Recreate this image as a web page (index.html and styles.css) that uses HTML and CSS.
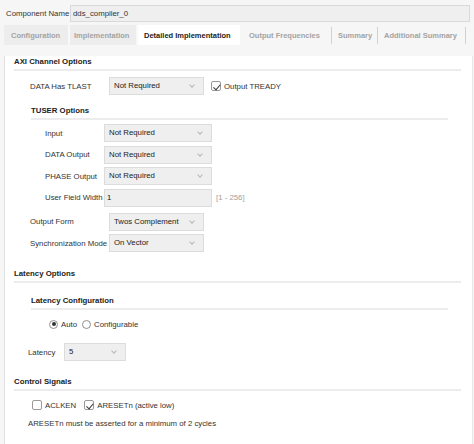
FILE: index.html
```html
<!DOCTYPE html>
<html>
<head>
<meta charset="utf-8">
<link rel="stylesheet" href="styles.css">
</head>
<body>
<div class="top">
  <span class="top-label">Component Name</span>
  <div class="name-input">dds_compiler_0</div>
</div>
<div class="tabs">
  <div class="tab t1">Configuration</div>
  <div class="tab t2">Implementation</div>
  <div class="tab active">Detailed Implementation</div>
  <div class="tab sep">Output Frequencies</div>
  <div class="tab sep">Summary</div>
  <div class="tab sep">Additional Summary</div>
</div>
<div class="panel">
  <div class="hdr h-axi">AXI Channel Options</div>
  <div class="row r-tlast">
    <span class="lbl w78">DATA Has TLAST</span>
    <div class="sel w95">Not Required<span class="chev"></span></div>
    <span class="chk on"></span><span class="ctext">Output TREADY</span>
  </div>
  <div class="hdr sub h-tuser">TUSER Options</div>
  <div class="tuser">
    <div class="row"><span class="lbl w60">Input</span><div class="sel w108">Not Required<span class="chev"></span></div></div>
    <div class="row"><span class="lbl w60">DATA Output</span><div class="sel w108">Not Required<span class="chev"></span></div></div>
    <div class="row"><span class="lbl w60">PHASE Output</span><div class="sel w108">Not Required<span class="chev"></span></div></div>
    <div class="row"><span class="lbl w60">User Field Width</span><div class="inp w108">1</div><span class="range">[1 - 256]</span></div>
  </div>
  <div class="plain">
    <div class="row"><span class="lbl w78">Output Form</span><div class="sel w95">Twos Complement<span class="chev"></span></div></div>
    <div class="row"><span class="lbl w78">Synchronization Mode</span><div class="sel w95">On Vector<span class="chev"></span></div></div>
  </div>
  <div class="hdr h-lat">Latency Options</div>
  <div class="hdr sub h-latcfg">Latency Configuration</div>
  <div class="radios">
    <span class="radio on"></span><span class="rtext">Auto</span>
    <span class="radio"></span><span class="rtext">Configurable</span>
  </div>
  <div class="row r-lat"><span class="lbl w30">Latency</span><div class="sel w62">5<span class="chev"></span></div></div>
  <div class="hdr h-ctrl">Control Signals</div>
  <div class="checks">
    <span class="chk"></span><span class="ctext">ACLKEN</span>
    <span class="chk on"></span><span class="ctext">ARESETn (active low)</span>
  </div>
  <div class="note">ARESETn must be asserted for a minimum of 2 cycles</div>
</div>
</body>
</html>
```

FILE: styles.css
```css
* { box-sizing: border-box; }
html, body { margin: 0; padding: 0; }
body {
  width: 474px;
  height: 444px;
  background: #f6f6f6;
  font-family: "Liberation Sans", Arial, sans-serif;
  font-size: 7.8px;
  color: #333;
  overflow: hidden;
  white-space: nowrap;
}
.top {
  display: flex;
  align-items: center;
  padding: 5px 4px 0 6px;
  height: 22px;
}
.top-label { width: 64px; flex-shrink: 0; color: #333; }
.name-input {
  flex: 1;
  height: 17px;
  line-height: 15px;
  padding-left: 2px;
  background: #efefef;
  border: 1px solid #d9d9d9;
  color: #333;
}
.tabs {
  display: flex;
  height: 23px;
  margin: 0 4px 0 4px;
  padding-top: 3px;
  align-items: stretch;
}
.tab {
  font-weight: bold;
  font-size: 7.5px;
  color: #a3a3a3;
  display: flex;
  align-items: center;
  padding: 0 5px;
  flex-shrink: 0;
}
.t1 { width: 66px; padding-left: 7px; background: #ededed; border-right: 2px solid #f8f8f8; }
.t2 { width: 68px; padding-left: 4px; background: #ededed; border-right: 2px solid #f8f8f8; }
.active { background: #fff; color: #222; width: 102px; padding-left: 6px; }
.sep { border-right: 1px solid #d2d2d2; margin: 2px 0 1px 0; padding: 0 4px 0 6px; }
.sep:nth-child(4) { width: 88px; margin-left: 4px; padding-left: 5px; }
.sep:nth-child(5) { width: 46px; }
.sep:nth-child(6) { width: 88px; }
.panel {
  margin-left: 4px;
  width: 469px;
  height: 397px;
  background: #fff;
  border-left: 1px solid #e2e2e2;
  border-right: 1px solid #e8e8e8;
  border-bottom: 2px solid #d6d6d6;
  padding: 0 0 0 9px;
}
.hdr {
  font-weight: bold;
  color: #222;
  line-height: 12px;
  padding-bottom: 1px;
  border-bottom: 2px solid #ececec;
  width: 447px;
}
.hdr.sub { margin-left: 17px; width: 417px; }
.h-axi { margin-top: 11px; }
.row { display: flex; align-items: center; height: 18px; }
.lbl { padding-left: 16px; flex-shrink: 0; }
.w78 { width: 95px; }
.w60 { width: 90px; padding-left: 31px; }
.w30 { width: 50px; padding-left: 15px; }
.sel, .inp {
  position: relative;
  height: 18px;
  line-height: 16px;
  padding-left: 4px;
  background: #efefef;
  border: 1px solid #dcdcdc;
  color: #222;
  flex-shrink: 0;
}
.inp { padding-left: 2px; }
.w95 { width: 95px; }
.w108 { width: 108px; }
.w62 { width: 62px; }
.chev {
  position: absolute;
  right: 9px;
  top: 5px;
  width: 4px;
  height: 4px;
  border-right: 1px solid #b8b8b8;
  border-bottom: 1px solid #b8b8b8;
  transform: rotate(45deg);
}
.r-tlast { margin-top: 6px; }
.r-tlast .chk { margin-left: 7px; }
.chk {
  width: 10px;
  height: 10px;
  border: 1px solid #9a9a9a;
  border-radius: 2px;
  background: #fff;
  position: relative;
  display: inline-block;
  flex-shrink: 0;
}
.chk.on::after {
  content: "";
  position: absolute;
  left: 2.5px;
  top: 0.5px;
  width: 3px;
  height: 5.5px;
  border-right: 1.2px solid #3a3a3a;
  border-bottom: 1.2px solid #3a3a3a;
  transform: rotate(40deg);
}
.ctext { margin-left: 3px; }
.h-tuser { margin-top: 10px; }
.tuser { margin-top: 4px; display: flex; flex-direction: column; gap: 3.6px; }
.range { margin-left: 4px; color: #a0a0a0; }
.plain { margin-top: 6px; display: flex; flex-direction: column; gap: 3.6px; }
.h-lat { margin-top: 16px; }
.h-latcfg { margin-top: 12px; }
.radios { display: flex; align-items: center; margin-top: 8px; padding-left: 35px; height: 12px; }
.radio {
  width: 9px;
  height: 9px;
  border: 1px solid #8f8f8f;
  border-radius: 50%;
  position: relative;
  display: inline-block;
  flex-shrink: 0;
}
.radio.on::after {
  content: "";
  position: absolute;
  left: 1.5px;
  top: 1.5px;
  width: 4px;
  height: 4px;
  background: #333;
  border-radius: 50%;
}
.rtext { margin: 0 5px 0 3px; }
.r-lat { margin-top: 13px; }
.r-lat .lbl { padding-left: 14px; width: 50px; }
.h-ctrl { margin-top: 15px; }
.checks { display: flex; align-items: center; margin-top: 8px; padding-left: 18px; height: 12px; }
.checks .chk:nth-of-type(3) { margin-left: 8px; }
.checks .ctext { margin-left: 3px; }
.note { margin-top: 7px; padding-left: 14px; line-height: 12px; }
```
